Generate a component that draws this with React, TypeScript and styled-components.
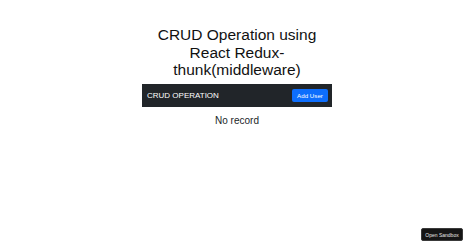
import React from 'react';
import styled, { createGlobalStyle } from 'styled-components';

const GlobalStyle = createGlobalStyle`
  html, body {
    margin: 0;
    padding: 0;
    background: #ffffff;
    font-family: "Liberation Sans", Arial, sans-serif;
    color: #212529;
  }
`;

const Page = styled.div`
  display: flex;
  flex-direction: column;
  align-items: center;
  padding-top: 26px;
`;

const Container = styled.div`
  width: 190px;
  display: flex;
  flex-direction: column;
`;

const Title = styled.h1`
  margin: 0 0 5px;
  font-size: 15.5px;
  line-height: 17.7px;
  font-weight: 400;
  text-align: center;
  color: #111;
`;

const NavBar = styled.div`
  height: 23px;
  background: #212529;
  display: flex;
  align-items: center;
  justify-content: space-between;
  padding: 0 4px 0 5px;
`;

const Brand = styled.span`
  color: #ffffff;
  font-size: 8px;
`;

const Button = styled.button`
  height: 13px;
  width: 36px;
  padding: 0;
  border: none;
  border-radius: 2px;
  background: #0d6efd;
  color: #ffffff;
  font-family: inherit;
  font-size: 6.2px;
  cursor: pointer;
`;

const Empty = styled.p`
  margin: 8px 0 0;
  text-align: center;
  font-size: 10px;
  color: #212529;
`;

const SandboxLink = styled.a`
  position: fixed;
  right: 11px;
  bottom: 7px;
  width: 42px;
  height: 13px;
  box-sizing: border-box;
  display: flex;
  align-items: center;
  justify-content: center;
  background: #151515;
  border: 1px solid #3a3a3a;
  border-radius: 2px;
  color: #e6e6e6;
  font-size: 5px;
  text-decoration: none;
`;

export default function App() {
  return (
    <>
      <GlobalStyle />
      <Page>
        <Container>
          <Title>CRUD Operation using React Redux-thunk(middleware)</Title>
          <NavBar>
            <Brand>CRUD OPERATION</Brand>
            <Button>Add User</Button>
          </NavBar>
          <Empty>No record</Empty>
        </Container>
      </Page>
      <SandboxLink href="#">Open Sandbox</SandboxLink>
    </>
  );
}
